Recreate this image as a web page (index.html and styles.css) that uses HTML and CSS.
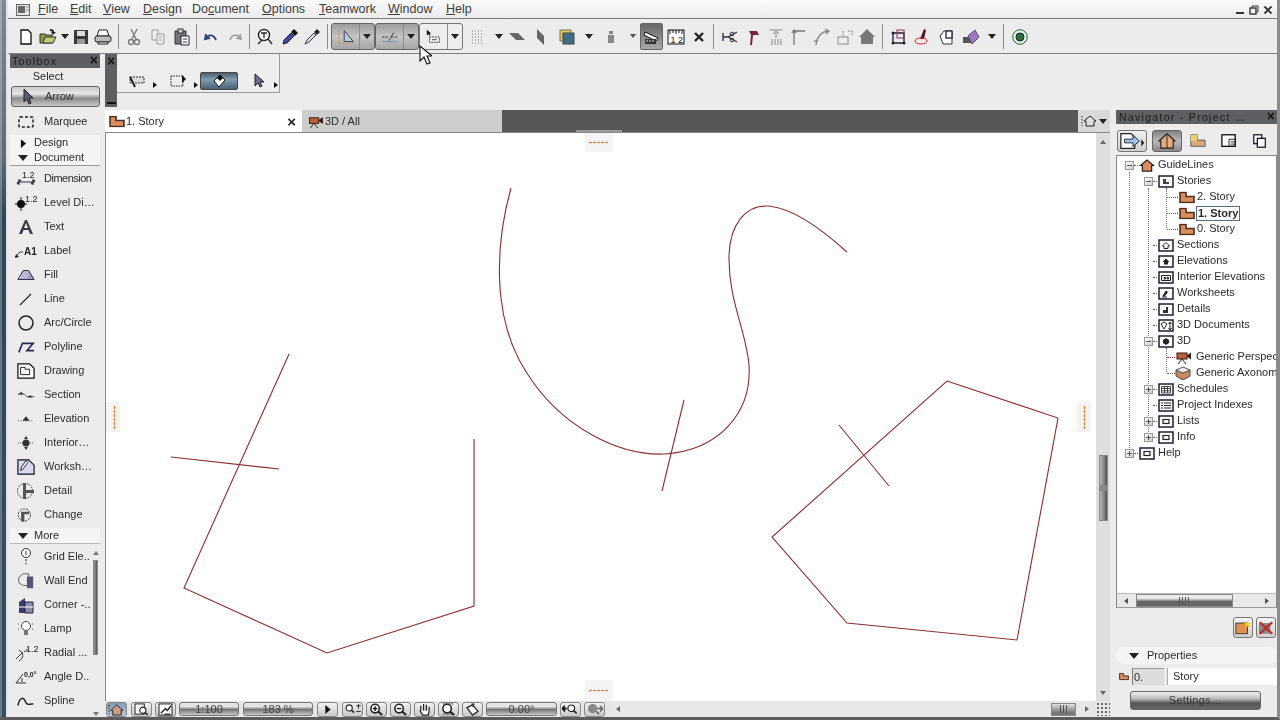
FILE: index.html
```html
<!DOCTYPE html>
<html lang="en">
<head>
<meta charset="utf-8">
<title>Navigator</title>
<link rel="stylesheet" href="styles.css">
</head>
<body>
<svg class="sprite" aria-hidden="true">
  <symbol id="story" viewBox="0 0 16 12"><path d="M1 1h6v4h8v6H1z" fill="#dd8d5c" stroke="#4b3026" stroke-width="1.6"/></symbol>
  <symbol id="box" viewBox="0 0 16 13"><rect x="1" y="1" width="14" height="11" fill="#fff" stroke="#1c1c3a" stroke-width="1.5"/></symbol>
  <symbol id="folder" viewBox="0 0 16 13"><rect x="1" y="1" width="14" height="11" fill="#fff" stroke="#1c1c3a" stroke-width="1.5"/><rect x="5" y="4.5" width="6" height="4" fill="none" stroke="#222" stroke-width="1.2"/></symbol>
  <symbol id="tri-r" viewBox="0 0 8 10"><path d="M1 0l6 5-6 5z" fill="#111"/></symbol>
  <symbol id="tri-d" viewBox="0 0 10 8"><path d="M0 1h10L5 7z" fill="#222"/></symbol>
  <symbol id="tri-g" viewBox="0 0 10 8"><path d="M1 1h8L5 6z" fill="#555"/></symbol>
  <symbol id="mag" viewBox="0 0 18 14"><circle cx="7.5" cy="6" r="4.6" fill="#fff" stroke="#222" stroke-width="1.7"/><path d="M11 9.5l4 3.5" stroke="#222" stroke-width="2.2"/></symbol>
</svg>

<header class="menubar">
  <svg class="appicon" viewBox="0 0 14 12"><rect x=".5" y=".5" width="13" height="11" fill="#e3e6e6" stroke="#666"/><rect x="2" y="2" width="7" height="7" fill="#666"/><path d="M10 3h3M10 6h3" stroke="#888"/></svg>
  <nav class="menus">
    <span class="menu m-file"><u>F</u>ile</span>
    <span class="menu m-edit"><u>E</u>dit</span>
    <span class="menu m-view"><u>V</u>iew</span>
    <span class="menu m-design"><u>D</u>esign</span>
    <span class="menu m-doc">Do<u>c</u>ument</span>
    <span class="menu m-opt"><u>O</u>ptions</span>
    <span class="menu m-team"><u>T</u>eamwork</span>
    <span class="menu m-win"><u>W</u>indow</span>
    <span class="menu m-help"><u>H</u>elp</span>
  </nav>
  <div class="winctl">
    <svg viewBox="0 0 10 10" class="wc"><path d="M1 8h8" stroke="#333" stroke-width="2"/></svg>
    <svg viewBox="0 0 10 10" class="wc"><rect x="1" y="3" width="6" height="6" fill="none" stroke="#333" stroke-width="1.4"/><path d="M3 2.5V1h6v6H7.5" fill="none" stroke="#333"/></svg>
    <svg viewBox="0 0 10 10" class="wc"><path d="M1.500 1.500l7 7M8.500 1.500l-7 7" stroke="#333" stroke-width="1.800"/></svg>
  </div>
</header>

<div class="toolbar">
  <span class="w22"><svg class="i" viewBox="0 0 18 18"><path d="M4 2h7l3 3v11H4z" fill="#fff" stroke="#111" stroke-width="1.300"/></svg></span>
  <span class="w22"><svg class="i" viewBox="0 0 18 18"><path d="M1 6h5l1 1h6v8H1z" fill="#8c9a3e" stroke="#333"/><path d="M4 15l2-6h11l-3 6z" fill="#c7cc77" stroke="#333"/><path d="M11 1c3 0 4 1 4 3h2l-3 3-2-3h1c0-1-1-1-2-1z" fill="#222"/></svg></span>
  <span class="w11"><svg class="ar" viewBox="0 0 10 8"><use href="#tri-d"/></svg></span>
  <span class="w22"><svg class="i" viewBox="0 0 18 18"><path d="M2 2h14v14H2z" fill="#3a3a3a"/><rect x="5" y="3" width="8" height="5" fill="#dcdcdc"/><rect x="5" y="11" width="8" height="5" fill="#999"/></svg></span>
  <span class="w22"><svg class="i" viewBox="0 0 18 18"><path d="M5 2h8l2 6H3z" fill="#fff" stroke="#222"/><rect x="1" y="8" width="16" height="6" rx="2" fill="#bbb" stroke="#222"/><path d="M4 14h10v2H4z" fill="#fff" stroke="#222"/></svg></span>
  <span class="sep w8"></span>
  <span class="w23"><svg class="i" viewBox="0 0 18 18"><g stroke="#777" fill="none" stroke-width="1.300"><path d="M6 1l5 10M12 1L7 11"/><circle cx="6" cy="14" r="2.500"/><circle cx="12" cy="14" r="2.500"/></g></svg></span>
  <span class="w25"><svg class="i" viewBox="0 0 18 18"><path d="M3 2h6v10H3z" fill="#eee" stroke="#999"/><path d="M8 6h7v10H8z" fill="#eee" stroke="#999"/><path d="M10 9h3M10 12h3" stroke="#999"/></svg></span>
  <span class="w23"><svg class="i" viewBox="0 0 18 18"><path d="M2 3h11v13H2z" fill="#777" stroke="#333"/><rect x="5" y="1" width="5" height="4" fill="#ccc" stroke="#333"/><path d="M8 8h8v9H8z" fill="#fff" stroke="#223"/><path d="M10 11h4M10 14h4" stroke="#334"/></svg></span>
  <span class="sep w6"></span>
  <span class="w24"><svg class="i" viewBox="0 0 18 18"><path d="M4 6l-1 5 5-1M3.500 10.500C6 6 12 6 14 12" fill="none" stroke="#2a3f7a" stroke-width="1.800"/></svg></span>
  <span class="w24"><svg class="i" viewBox="0 0 18 18"><path d="M14 6l1 5-5-1M14.500 10.500C12 6 6 6 4 12" fill="none" stroke="#999" stroke-width="1.500"/></svg></span>
  <span class="sep w4"></span>
  <span class="w28"><svg class="i" viewBox="0 0 18 18"><circle cx="8" cy="7" r="5.500" fill="#fff" stroke="#222" stroke-width="1.400"/><path d="M5 5h6M8 5v5M12 11l4 5M2 16l4-4" stroke="#222" stroke-width="1.300"/></svg></span>
  <span class="w21"><svg class="i" viewBox="0 0 18 18"><path d="M2 16l1-4 7-7 3 3-7 7z" fill="#3d4a9e" stroke="#223"/><path d="M10 4l3-3 4 4-3 3z" fill="#111"/></svg></span>
  <span class="w23"><svg class="i" viewBox="0 0 18 18"><path d="M2 16l2-4 7-7 2 2-7 7z" fill="#dfe0f0" stroke="#334"/><path d="M11 4l3-3 3 3-3 3z" fill="#223"/></svg></span>
  <span class="sep w8"></span>
  <span class="tgroup on">
    <span class="tmain"><svg class="i" viewBox="0 0 20 18"><path d="M8 2l10 12H8z" fill="#bcd0d8" stroke="#335"/><path d="M2 2v14M2 16h16" stroke="#b9922f" stroke-dasharray="2 1.500" fill="none"/></svg></span>
    <span class="tdrop"><svg class="ar" viewBox="0 0 10 8"><use href="#tri-d"/></svg></span>
  </span>
  <span class="tgroup on">
    <span class="tmain"><svg class="i" viewBox="0 0 20 18"><path d="M1 9h7M11 9h8" stroke="#334" stroke-dasharray="3 1"/><path d="M9 13l5-9" stroke="#333"/><path d="M2 14h16" stroke="#2e7fc1" stroke-dasharray="2 1"/></svg></span>
    <span class="tdrop"><svg class="ar" viewBox="0 0 10 8"><use href="#tri-d"/></svg></span>
  </span>
  <span class="tgroup">
    <span class="tmain"><svg class="i" viewBox="0 0 20 18"><path d="M2 1v6l2-1 1 2 1-1-1-2h2z" fill="#111"/><rect x="5" y="9" width="11" height="6" fill="none" stroke="#333" stroke-dasharray="2 1"/><path d="M8 12h5" stroke="#333"/></svg></span>
    <span class="tdrop"><svg class="ar" viewBox="0 0 10 8"><use href="#tri-d"/></svg></span>
  </span>
  <span class="w30"><svg class="i" viewBox="0 0 18 18"><path d="M3 3h12M3 6h12M3 9h12M3 12h12M3 15h12" stroke="#777" stroke-dasharray="1 2"/></svg></span>
  <span class="w12"><svg class="ar" viewBox="0 0 10 8"><use href="#tri-d"/></svg></span>
  <span class="w24"><svg class="i" viewBox="0 0 18 18"><path d="M1 5h9l7 7H8z" fill="#666"/></svg></span>
  <span class="w22"><svg class="i" viewBox="0 0 18 18"><path d="M6 1l7 7v9L6 10z" fill="#666"/></svg></span>
  <span class="w32"><svg class="i" viewBox="0 0 18 18"><rect x="2" y="2" width="11" height="11" fill="#e6c65a" stroke="#776"/><rect x="5" y="5" width="11" height="11" fill="#3f6f86" stroke="#444"/></svg></span>
  <span class="w12"><svg class="ar" viewBox="0 0 10 8"><use href="#tri-d"/></svg></span>
  <span class="w32"><svg class="i" viewBox="0 0 18 18"><rect x="7" y="3" width="4" height="3" fill="#888"/><rect x="6" y="7" width="6" height="8" fill="#888"/></svg></span>
  <span class="w12"><svg class="ar" viewBox="0 0 10 8"><use href="#tri-g"/></svg></span>
  <span class="tactive"><svg class="i" viewBox="0 0 18 18"><path d="M2 4l13 6-2 3L1 7z" fill="#fff" stroke="#111"/><path d="M2 11h11v5H2z" fill="#333"/><path d="M3 13h9" stroke="#ddd" stroke-dasharray="2 1"/></svg></span>
  <span class="w23 ml1"><svg class="i" viewBox="0 0 18 18"><rect x="1" y="2" width="16" height="14" fill="#fff" stroke="#111"/><path d="M3 2v4M6 2v3M9 2v4M12 2v3M15 2v4" stroke="#111"/><text x="3.500" y="14.500" class="rule">1 2</text></svg></span>
  <span class="w23"><svg class="i" viewBox="0 0 18 18"><path d="M5 5l8 8M13 5l-8 8" stroke="#222" stroke-width="2.400"/></svg></span>
  <span class="sep w6"></span>
  <span class="w24 ml2"><svg class="i" viewBox="0 0 18 18"><path d="M2 5v8M2 9h5l9-5M7 9l9 5" stroke="#334" fill="none" stroke-width="1.400"/><circle cx="11" cy="6" r="1.800" fill="none" stroke="#334"/><circle cx="11" cy="12" r="1.800" fill="none" stroke="#334"/></svg></span>
  <span class="w23"><svg class="i" viewBox="0 0 18 18"><path d="M4 3h8l2 4H8l-1 10H5L6 7z" fill="#7a2438"/></svg></span>
  <span class="w22"><svg class="i" viewBox="0 0 18 18"><path d="M3 2h12M9 3v7M6 6l3-3 3 3M5 11v6M8 11v6M11 11v6M14 11v6" stroke="#888" fill="none"/></svg></span>
  <span class="w24"><svg class="i" viewBox="0 0 18 18"><path d="M4 17V3h11M2 5l2-3 2 3" stroke="#777" fill="none" stroke-width="1.300"/></svg></span>
  <span class="w22"><svg class="i" viewBox="0 0 18 18"><path d="M3 17C4 9 8 4 15 3M12 1l4 2-3 3M1 13h4" stroke="#888" fill="none" stroke-width="1.300"/></svg></span>
  <span class="w23"><svg class="i" viewBox="0 0 18 18"><rect x="2" y="9" width="10" height="7" fill="none" stroke="#888"/><path d="M7 3v6M12 3h4v4" stroke="#888" stroke-dasharray="2 1" fill="none"/></svg></span>
  <span class="w22"><svg class="i" viewBox="0 0 18 18"><path d="M9 1l8 8h-2v7H3V9H1z" fill="#777"/></svg></span>
  <span class="sep w8"></span>
  <span class="w24"><svg class="i" viewBox="0 0 18 18"><path d="M4 5h11v10H4z" fill="none" stroke="#223" stroke-width="1.300"/><rect x="8" y="2" width="7" height="8" fill="none" stroke="#8b2a5c"/><circle cx="4" cy="15" r="1.500" fill="#223"/><circle cx="15" cy="15" r="1.500" fill="#223"/><circle cx="4" cy="5" r="1.500" fill="#223"/></svg></span>
  <span class="w24"><svg class="i" viewBox="0 0 18 18"><path d="M11 1l2 1-2 9H7z" fill="#4a1a2a"/><ellipse cx="8" cy="13" rx="6" ry="3" fill="none" stroke="#c23"/></svg></span>
  <span class="w24"><svg class="i" viewBox="0 0 18 18"><path d="M3 8l4-5h8v13H6z" fill="#fff" stroke="#334"/><rect x="9" y="3" width="6" height="7" fill="#fff" stroke="#223" stroke-width="1.300"/></svg></span>
  <span class="w26"><svg class="i" viewBox="0 0 18 18"><path d="M1 9h8v6H1z" fill="#555"/><path d="M6 8l7-6 4 7-7 7z" fill="#9a78c2" stroke="#5a4a7a"/></svg></span>
  <span class="w16"><svg class="ar" viewBox="0 0 10 8"><use href="#tri-d"/></svg></span>
  <span class="sep w6"></span>
  <span class="w28"><svg class="i" viewBox="0 0 18 18"><circle cx="9" cy="9" r="7.300" fill="#e4efe4" stroke="#2b6a3a"/><circle cx="9" cy="9" r="4" fill="#2f6d3a" stroke="#123"/></svg></span>
</div>

<div class="work">
  <aside class="toolbox">
    <div class="ph">Toolbox<span class="phx">×</span></div>
    <div class="sel">Select</div>
    <div class="tool arrow"><span class="ti"><svg class="i" viewBox="0 0 18 18"><path d="M5 1v13l3-3 2 5 2-1-2-5h4z" fill="#5a5a7a" stroke="#222"/></svg></span><span class="tl">Arrow</span></div>
    <div class="tool"><span class="ti"><svg class="i" viewBox="0 0 18 18"><rect x="2" y="4" width="14" height="10" rx="1" fill="none" stroke="#222" stroke-width="1.500" stroke-dasharray="3 2"/></svg></span><span class="tl">Marquee</span></div>
    <div class="sect s1"><svg class="tr" viewBox="0 0 8 10"><use href="#tri-r"/></svg>Design</div>
    <div class="sect s2"><svg class="td" viewBox="0 0 10 8"><use href="#tri-d"/></svg>Document</div>
    <div class="tool"><span class="ti"><svg class="iw" viewBox="0 0 24 18"><path d="M3 12h18M5 9v6M19 9v6M3 14l4-4M17 14l4-4" stroke="#334" stroke-width="1.200"/><text x="8" y="8" class="sup">1.2</text></svg></span><span class="tl tight">Dimension</span></div>
    <div class="tool"><span class="ti"><svg class="iw" viewBox="0 0 24 18"><circle cx="7" cy="10" r="4" fill="#111"/><path d="M7 3v14M1 10h12" stroke="#111"/><text x="11" y="8" class="sup">1.2</text></svg></span><span class="tl">Level Di…</span></div>
    <div class="tool"><span class="ti"><svg class="i" viewBox="0 0 18 18"><path d="M2 16L8 2h2l6 14h-3l-1.500-4h-5L5 16zM7 10h4L9 5z" fill="#3a3a4a"/></svg></span><span class="tl">Text</span></div>
    <div class="tool"><span class="ti"><svg class="iw" viewBox="0 0 24 18"><path d="M1 15l5-5h3" stroke="#333" fill="none"/><path d="M1 16l1-4 3 3z" fill="#222"/><text x="10" y="13" class="lab">A1</text></svg></span><span class="tl">Label</span></div>
    <div class="tool"><span class="ti"><svg class="i" viewBox="0 0 20 18"><path d="M1 14L7 4h6l6 10z" fill="#9d97c4" stroke="#223"/><path d="M3 13l6-8M6 13l6-8M9 13l4-5" stroke="#fff"/></svg></span><span class="tl">Fill</span></div>
    <div class="tool"><span class="ti"><svg class="i" viewBox="0 0 18 18"><path d="M3 15L14 4" stroke="#222" stroke-width="1.200"/></svg></span><span class="tl">Line</span></div>
    <div class="tool"><span class="ti"><svg class="i" viewBox="0 0 18 18"><circle cx="9" cy="9" r="7" fill="none" stroke="#222" stroke-width="1.500"/></svg></span><span class="tl">Arc/Circle</span></div>
    <div class="tool"><span class="ti"><svg class="i" viewBox="0 0 20 18"><path d="M2 15L6 5h12l-7 8h8" fill="none" stroke="#2a2a55" stroke-width="1.800"/></svg></span><span class="tl">Polyline</span></div>
    <div class="tool"><span class="ti"><svg class="i" viewBox="0 0 20 18"><path d="M1 1h13l5 5v11H1z" fill="#fff" stroke="#111" stroke-width="1.400"/><path d="M4 5h5v2h5v6H4z" fill="none" stroke="#111"/></svg></span><span class="tl">Drawing</span></div>
    <div class="tool"><span class="ti"><svg class="i" viewBox="0 0 22 18"><path d="M1 8h8l3 3h9" stroke="#333" fill="none"/><path d="M5 5l3 3H2zM16 9l3 3h-6z" fill="#333"/></svg></span><span class="tl">Section</span></div>
    <div class="tool"><span class="ti"><svg class="i" viewBox="0 0 20 18"><path d="M1 11h18" stroke="#333" stroke-dasharray="1 2"/><path d="M10 6l4 5H6z" fill="#333"/></svg></span><span class="tl">Elevation</span></div>
    <div class="tool"><span class="ti"><svg class="i" viewBox="0 0 18 18"><path d="M1 9h16" stroke="#555" stroke-dasharray="1 1"/><circle cx="9" cy="9" r="3.500" fill="#333"/><path d="M9 2l2 3H7zM9 16l2-3H7z" fill="#333"/></svg></span><span class="tl">Interior…</span></div>
    <div class="tool"><span class="ti"><svg class="i" viewBox="0 0 20 18"><path d="M1 1h12l6 6v10H1z" fill="#d8d8f0" stroke="#112" stroke-width="1.300"/><path d="M4 13l1-4 5-7 2 2-5 7z" fill="#fff" stroke="#111"/></svg></span><span class="tl">Worksh…</span></div>
    <div class="tool"><span class="ti"><svg class="i" viewBox="0 0 18 18"><circle cx="8" cy="9" r="7.500" fill="none" stroke="#333" stroke-dasharray="1.500 1"/><path d="M6 1h3v7h8v3H9v6H6z" fill="#555"/></svg></span><span class="tl">Detail</span></div>
    <div class="tool"><span class="ti"><svg class="i" viewBox="0 0 22 18"><circle cx="9" cy="9" r="7.500" fill="none" stroke="#333" stroke-dasharray="3 1"/><path d="M5 5h10v3H9v9H5z" fill="#555"/></svg></span><span class="tl">Change</span></div>
    <div class="sect s3"><svg class="td" viewBox="0 0 10 8"><use href="#tri-d"/></svg>More</div>
    <div class="more">
      <div class="morelist">
        <div class="tool"><span class="ti"><svg class="i" viewBox="0 0 18 18"><circle cx="9" cy="5" r="4.500" fill="#fff" stroke="#333"/><path d="M9 3v4" stroke="#333"/><path d="M9 11v7" stroke="#333" stroke-dasharray="2 1.500"/></svg></span><span class="tl">Grid Ele..</span></div>
        <div class="tool"><span class="ti"><svg class="i" viewBox="0 0 20 18"><path d="M2 5l5-4h6v13H7l-5-3z" fill="#eee" stroke="#555"/><path d="M11 4h7v13h-7z" fill="#55557a"/></svg></span><span class="tl">Wall End</span></div>
        <div class="tool"><span class="ti"><svg class="i" viewBox="0 0 18 18"><path d="M2 6l6-4v15H2z" fill="#3a3a66"/><path d="M8 6h8v11H8z" fill="#8b8bb0" stroke="#223"/><path d="M2 11h14" stroke="#fff"/></svg></span><span class="tl">Corner -..</span></div>
        <div class="tool"><span class="ti"><svg class="i" viewBox="0 0 18 18"><circle cx="9" cy="6" r="4.500" fill="#fff" stroke="#444"/><path d="M7 11h4v4H7z" fill="#777"/><path d="M1 4h2M15 4h2M1 9h2M15 9h2" stroke="#555" stroke-dasharray="1 1"/></svg></span><span class="tl">Lamp</span></div>
        <div class="tool"><span class="ti"><svg class="iw" viewBox="0 0 24 18"><path d="M5 6c5 3 5 8 0 11M2 15l7-7" fill="none" stroke="#333"/><path d="M10 8l4-3" stroke="#333"/><text x="12" y="8" class="sup">1.2</text></svg></span><span class="tl">Radial ...</span></div>
        <div class="tool"><span class="ti"><svg class="iw" viewBox="0 0 24 18"><path d="M2 15L9 6M2 15h10M8 14v-4" stroke="#333" fill="none"/><text x="10" y="9" class="lab2">0,0°</text></svg></span><span class="tl">Angle D..</span></div>
        <div class="tool"><span class="ti"><svg class="i" viewBox="0 0 20 18"><path d="M1 14C3 5 7 4 9 9s4 4 9 3" fill="none" stroke="#222" stroke-width="1.600"/></svg></span><span class="tl">Spline</span></div>
      </div>
      <div class="vscroll small">
        <svg class="sa" viewBox="0 0 8 6"><path d="M4 1l3 4H1z" fill="#777"/></svg>
        <div class="smalltrack"><div class="smallthumb"></div></div>
        <svg class="sa" viewBox="0 0 8 6"><path d="M4 5l3-4H1z" fill="#777"/></svg>
      </div>
    </div>
  </aside>

  <div class="infobox">
    <div class="dockbar"><span class="phx">×</span><span class="grip"></span></div>
    <div class="infoicons">
      <span class="ib ib1"><svg class="i" viewBox="0 0 18 14"><rect x="1" y="3" width="14" height="6" fill="#ddd" stroke="#333" stroke-dasharray="2 1"/><path d="M1 3l5 10" stroke="#222" stroke-width="2"/></svg><i class="cor"></i></span>
      <span class="ib ib2"><svg class="i" viewBox="0 0 18 14"><rect x="1" y="2" width="12" height="10" fill="none" stroke="#222" stroke-dasharray="1.500 1"/><path d="M12 1l4 4-4 4z" fill="#111"/></svg><i class="cor"></i></span>
      <span class="ib3"><svg class="i" viewBox="0 0 18 14"><path d="M4 7l6-6 5 5-6 7z" fill="#fff" stroke="#111"/><path d="M7 4l3-3 3 3-3 3z" fill="#111"/></svg></span>
      <span class="ib ib4"><svg class="i" viewBox="0 0 18 16"><path d="M5 1v12l3-3 2 4 2-1-2-4h4z" fill="#6a6a94" stroke="#222"/></svg><i class="cor"></i></span>
    </div>
  </div>

  <main class="center">
    <div class="tabs">
      <div class="tab active"><svg class="tabicon" viewBox="0 0 16 12"><use href="#story"/></svg><span>1. Story</span><span class="tabx">×</span></div>
      <div class="tab inactive"><svg class="tabicon" viewBox="0 0 16 14"><rect x="2" y="3" width="10" height="6" fill="#b6603a" stroke="#3a1a10"/><path d="M12 6l4-3v6zM7 9l-4 5M7 9l4 5" stroke="#3a1a10" fill="#3a1a10"/></svg><span>3D / All</span></div>
      <div class="tabfill"><span class="ghost"></span></div>
      <div class="tabmenu"><svg class="tabm" viewBox="0 0 26 14"><path d="M1 2v10" stroke="#333" stroke-dasharray="1.500 1.500"/><path d="M3 7l6-5 6 5h-2v5H5V7z" fill="#ddd" stroke="#222"/><path d="M18 5h8l-4 5z" fill="#222"/></svg></div>
    </div>
    <div class="canvasrow">
      <div class="canvas">
        <svg class="drawing" viewBox="106 133 990 568" preserveAspectRatio="none">
          <g class="ln">
            <path d="M289 354L184 588 327 653 474 606V439"/>
            <path d="M171 457L279 469"/>
            <path d="M511 188C495 245 492 318 525 370C560 428 620 456 665 454C720 450 752 412 749 365C746 330 728 300 729 255C730 225 745 205 768 206C795 208 825 232 847 252"/>
            <path d="M684 400L662 491"/>
            <path d="M947 381L1058 418 1017 640 847 623 772 537z"/>
            <path d="M839 425L889 486"/>
          </g>
          <g class="mk">
            <rect x="585" y="133" width="28" height="19"/><rect x="585" y="680" width="28" height="20"/>
            <rect x="106" y="402" width="14" height="30"/><rect x="1077" y="402" width="14" height="30"/>
          </g>
          <g class="mo">
            <path d="M589 142.500h20M589 690.500h20"/><path d="M114.500 406v23M1084.500 406v23"/>
          </g>
        </svg>
      </div>
      <div class="vscroll main">
        <svg class="sa up" viewBox="0 0 8 6"><path d="M4 1l3 4H1z" fill="#666"/></svg>
        <div class="track"><div class="thumb"></div></div>
        <svg class="sa" viewBox="0 0 8 6"><path d="M4 5l3-4H1z" fill="#666"/></svg>
      </div>
    </div>
    <div class="status">
      <span class="sb on"><svg class="si" viewBox="0 0 18 14"><path d="M1 2v10" stroke="#111" stroke-dasharray="1.500 1.500"/><path d="M3 8l6-6 7 6h-2v5H5V8z" fill="#c98" stroke="#222"/></svg></span>
      <span class="sb mla"><svg class="si" viewBox="0 0 18 14"><rect x="2" y="1" width="10" height="11" fill="#fff" stroke="#111"/><use href="#mag" x="5" y="3" width="13" height="11"/></svg></span>
      <span class="sb"><svg class="si" viewBox="0 0 18 14"><rect x="2" y="1" width="14" height="12" fill="#fff" stroke="#111"/><path d="M4 11l5-5 2 2 4-5M8 12h6" stroke="#222" stroke-width="1.500" fill="none"/></svg></span>
      <span class="sv v1">1:100</span>
      <span class="sv v2 mla">183 %</span>
      <span class="sb mla"><svg class="sp" viewBox="0 0 8 10"><use href="#tri-r"/></svg></span>
      <span class="sb mla"><svg class="si" viewBox="0 0 18 14"><use href="#mag" width="13" height="12"/><path d="M13 3h5M15.500 1v5M13 9h5" stroke="#222"/></svg></span>
      <span class="sb"><svg class="si" viewBox="0 0 18 14"><use href="#mag"/><path d="M5 6h5M7.500 3.500v5" stroke="#111" stroke-width="1.500"/></svg></span>
      <span class="sb"><svg class="si" viewBox="0 0 18 14"><use href="#mag"/><path d="M5 6h5" stroke="#111" stroke-width="1.500"/></svg></span>
      <span class="sb"><svg class="si" viewBox="0 0 18 14"><path d="M5 8V3M8 8V1M11 8V2M14 9V4M4 8l3 5h6l1-4" fill="#fff" stroke="#222" stroke-width="1.300"/></svg></span>
      <span class="sb"><svg class="si" viewBox="0 0 18 14"><use href="#mag"/><path d="M3 1h11M3 12h11" stroke="#222" stroke-dasharray="2 1"/></svg></span>
      <span class="sb"><svg class="si" viewBox="0 0 18 14"><path d="M3 5l6-3 6 7-6 4z" fill="#fff" stroke="#222" stroke-width="1.300"/><path d="M8 1h3l-2 3" stroke="#222" fill="none"/></svg></span>
      <span class="sv v3">0.00°</span>
      <span class="sb"><svg class="si" viewBox="0 0 18 14"><path d="M0 6h5M3 3l-3 3 3 3" stroke="#111" stroke-width="1.800" fill="none"/><use href="#mag" x="4" width="14" height="13"/></svg></span>
      <span class="sb"><svg class="si" viewBox="0 0 18 14"><circle cx="7" cy="6" r="5" fill="#888"/><path d="M11 9l3 3M12 6h5M15 3l3 3-3 3" stroke="#666" stroke-width="1.600" fill="none"/></svg></span>
      <div class="hbar">
        <svg class="sah" viewBox="0 0 6 8"><path d="M1 4l4-3v6z" fill="#666"/></svg>
        <span class="hspace"></span>
        <span class="hthumb"></span>
        <svg class="sah" viewBox="0 0 6 8"><path d="M5 4L1 1v6z" fill="#666"/></svg>
      </div>
      <span class="sgrip"></span>
    </div>
  </main>

  <aside class="navigator">
    <div class="ph nav">Navigator - Project …<span class="phx">×</span></div>
    <div class="navbtns">
      <span class="nb first"><svg class="nbi" viewBox="0 0 28 18"><path d="M2 1h11l4 4v12H2z" fill="#fff" stroke="#222" stroke-width="1.300"/><path d="M6 7h9V3l7 6-7 6v-4H6z" fill="#9fc6e8" stroke="#223"/><path d="M24 7l3 4-3 4z" fill="#111"/></svg></span>
      <span class="nb active"><svg class="nbs" viewBox="0 0 22 18"><path d="M2 9l9-8 9 8h-2v8H4V9z" fill="#e5a97a" stroke="#222" stroke-width="1.300"/><path d="M11 2v15" stroke="#222"/></svg></span>
      <span class="nb"><svg class="nbs" viewBox="0 0 22 18"><path d="M3 2h7v6h9v7H3z" fill="#d9a97a" stroke="#555"/><path d="M3 2h7v7H3z" fill="#e8d36a"/></svg></span>
      <span class="nb"><svg class="nbs" viewBox="0 0 22 18"><rect x="3" y="2" width="15" height="13" fill="#fff" stroke="#111" stroke-width="1.500"/><path d="M11 7h7v8h-7zM13 10h4M13 12.500h4" fill="none" stroke="#111"/></svg></span>
      <span class="nb"><svg class="nbs" viewBox="0 0 22 18"><rect x="4" y="2" width="9" height="10" fill="#fff" stroke="#112" stroke-width="1.400"/><rect x="8" y="6" width="9" height="10" fill="#fff" stroke="#112" stroke-width="1.400"/></svg></span>
    </div>
    <div class="tree">
      <span class="vl vl0"></span><span class="vl vl1"></span><span class="vl vl2"></span><span class="vl vl3"></span>
      <div class="row l0"><i class="xp minus"></i><i class="dot"></i><svg class="ic" viewBox="0 0 16 14"><path d="M1 7l7-6 7 6h-2v6H3V7z" fill="#dd8d5c" stroke="#222" stroke-width="1.300"/></svg><span>GuideLines</span></div>
      <div class="row l1"><i class="xp minus"></i><i class="dot"></i><svg class="ic" viewBox="0 0 16 13"><use href="#box"/><path d="M5 4h3v3h3v2H5z" fill="#444"/></svg><span>Stories</span></div>
      <div class="row l2"><i class="dot"></i><svg class="ic" viewBox="0 0 16 12"><use href="#story"/></svg><span>2. Story</span></div>
      <div class="row l2"><i class="dot"></i><svg class="ic" viewBox="0 0 16 12"><use href="#story"/></svg><span class="cur">1. Story</span></div>
      <div class="row l2"><i class="dot"></i><svg class="ic" viewBox="0 0 16 12"><use href="#story"/></svg><span>0. Story</span></div>
      <div class="row l1"><i class="xp none"></i><i class="dot"></i><svg class="ic" viewBox="0 0 16 13"><use href="#box"/><path d="M4.500 7L8 3.500 11.500 7H10v2.500H6V7z" fill="#fff" stroke="#222"/></svg><span>Sections</span></div>
      <div class="row l1"><i class="xp none"></i><i class="dot"></i><svg class="ic" viewBox="0 0 16 13"><use href="#box"/><path d="M4.500 7L8 3.500 11.500 7H10v2.500H6V7z" fill="#222"/></svg><span>Elevations</span></div>
      <div class="row l1"><i class="xp none"></i><i class="dot"></i><svg class="ic" viewBox="0 0 16 13"><use href="#box"/><path d="M3.500 4.500h9v5h-9zM6 6.500h1.500v1.500H6zM9 6.500h1.500v1.500H9z" fill="none" stroke="#222"/></svg><span>Interior Elevations</span></div>
      <div class="row l1"><i class="xp none"></i><i class="dot"></i><svg class="ic" viewBox="0 0 16 13"><use href="#box"/><path d="M4 10h5M5 9l3-5 1.500 1-3 4z" fill="#222" stroke="#222"/></svg><span>Worksheets</span></div>
      <div class="row l1"><i class="xp none"></i><i class="dot"></i><svg class="ic" viewBox="0 0 16 13"><use href="#box"/><path d="M5 7h3V4h2v6H5z" fill="#333"/></svg><span>Details</span></div>
      <div class="row l1"><i class="xp none"></i><i class="dot"></i><svg class="ic" viewBox="0 0 16 13"><use href="#box"/><path d="M3 5l3-2 3 2-3 5z" fill="#fff" stroke="#222"/><path d="M12 3v8M10.500 5L12 3l1.500 2M10.500 9l1.500 2 1.500-2" stroke="#222" fill="none"/></svg><span>3D Documents</span></div>
      <div class="row l1"><i class="xp minus"></i><i class="dot"></i><svg class="ic" viewBox="0 0 16 13"><use href="#box"/><path d="M5 5l3-2 3 2v3l-3 2-3-2z" fill="#222"/></svg><span>3D</span></div>
      <div class="row l2b"><i class="dot red"></i><svg class="ic wide" viewBox="0 0 16 14"><rect x="2" y="3" width="10" height="6" fill="#b6603a" stroke="#3a1a10"/><path d="M12 6l4-3v6zM7 9l-4 5M7 9l4 5" stroke="#3a1a10" fill="#3a1a10"/></svg><span>Generic Perspec</span></div>
      <div class="row l2b"><i class="dot"></i><svg class="ic wide" viewBox="0 0 16 14"><path d="M1 4l7 3 7-3v6l-7 4-7-4z" fill="#c98b5c" stroke="#444"/><path d="M1 4l7-3 7 3-7 3z" fill="#eee" stroke="#555"/></svg><span>Generic Axonom</span></div>
      <div class="row l1"><i class="xp plus"></i><i class="dot"></i><svg class="ic" viewBox="0 0 16 13"><use href="#box"/><path d="M3.500 3.500h9v6.500h-9zM3.500 5.500h9M3.500 7.800h9M6.500 3.500v6.500M9.500 3.500v6.500" fill="none" stroke="#222" stroke-width=".8"/></svg><span>Schedules</span></div>
      <div class="row l1"><i class="xp none"></i><i class="dot"></i><svg class="ic" viewBox="0 0 16 13"><use href="#box"/><path d="M3 4h2M6 4h7M3 6.500h2M6 6.500h7M3 9h2M6 9h7" stroke="#222"/></svg><span>Project Indexes</span></div>
      <div class="row l1"><i class="xp plus"></i><i class="dot"></i><svg class="ic" viewBox="0 0 16 13"><use href="#folder"/></svg><span>Lists</span></div>
      <div class="row l1"><i class="xp plus"></i><i class="dot"></i><svg class="ic" viewBox="0 0 16 13"><use href="#folder"/></svg><span>Info</span></div>
      <div class="row l0"><i class="xp plus"></i><i class="dot"></i><svg class="ic" viewBox="0 0 16 13"><use href="#folder"/></svg><span>Help</span></div>
    </div>
    <div class="navscroll">
      <svg class="sah" viewBox="0 0 6 8"><path d="M1 4l4-3v6z" fill="#555"/></svg>
      <span class="navthumb"></span>
      <svg class="sah" viewBox="0 0 6 8"><path d="M5 4L1 1v6z" fill="#555"/></svg>
    </div>
    <div class="navactions">
      <span class="na"><svg class="nai" viewBox="0 0 18 16"><rect x="1" y="3" width="13" height="12" fill="#e0914f" stroke="#332"/><path d="M14 0l1 3 3 0-2 2 1 3-3-1.500-3 1.500 1-3-2-2 3 0z" fill="#e6d400"/></svg></span>
      <span class="na"><svg class="nai" viewBox="0 0 18 16"><rect x="1" y="3" width="13" height="12" fill="#888"/><path d="M2 2l14 13M16 2L2 15" stroke="#c0271f" stroke-width="2.400"/></svg></span>
    </div>
    <div class="props"><svg class="td big" viewBox="0 0 10 8"><use href="#tri-d"/></svg>Properties</div>
    <div class="proprow">
      <svg class="pi" viewBox="0 0 16 12"><use href="#story"/></svg>
      <span class="fld idx">0.</span>
      <span class="fld name">Story</span>
    </div>
    <div class="settings">Settings…</div>
  </aside>
</div>

<svg class="cursor" viewBox="0 0 13 21"><path d="M1 1v15l4-4 3 7 3-1-3-7h5z" fill="#fff" stroke="#111" stroke-width="1.100"/></svg>
</body>
</html>
```

FILE: styles.css
```css
* { box-sizing: border-box; }
html, body { margin: 0; height: 720px; }
body {
  position: relative;
  width: 1280px;
  overflow: hidden;
  background: #ececec;
  color: #2b2b2b;
  font: 11px/1.2 "Liberation Sans", Arial, sans-serif;
  display: flex;
  flex-direction: column;
  padding-left: 8px;
  border-bottom: 3px solid #5c5c5c;
  border-right: 3px solid #8c8c8c;
  filter: blur(.3px);
}
body::before {
  content: "";
  position: absolute;
  left: 0; top: 0; bottom: 0;
  width: 8px;
  background:
    linear-gradient(90deg, rgba(255,255,255,.25) 0 2px, rgba(0,0,0,0) 2px 6px, #e2e6e8 6px 8px),
    linear-gradient(#7d8a96, #5c6b78 22%, #2f4755 30%, #34505f);
}
.sprite { position: absolute; width: 0; height: 0; }
.cursor { position: absolute; left: 419px; top: 45px; width: 13px; height: 21px; }

/* menu bar */
.menubar {
  height: 19px;
  display: flex;
  align-items: center;
  background: linear-gradient(#fafafa, #ececec);
  border-bottom: 1px solid #7b7b7b;
  padding-top: 1px;
}
.appicon { width: 14px; height: 12px; margin-left: 8px; }
.menus { display: flex; font-size: 12.5px; color: #3c3c3c; margin-left: 8px; }
.menu { display: block; }
.m-file { width: 32px; }
.m-edit { width: 33px; }
.m-view { width: 40px; }
.m-design { width: 49px; }
.m-doc { width: 70px; }
.m-opt { width: 57px; }
.m-team { width: 69px; }
.m-win { width: 58px; }
.winctl { margin-left: auto; margin-right: 4px; display: flex; gap: 4px; }
.wc { width: 10px; height: 10px; }

/* main toolbar */
.toolbar {
  height: 35px;
  padding: 1px 0 0 7px;
  display: flex;
  align-items: center;
  border-bottom: 1px solid #808080;
  background: #ececec;
}
.toolbar > span { display: flex; align-items: center; justify-content: center; flex: none; }
.i { width: 18px; height: 18px; display: block; flex: none; }
.iw { width: 24px; height: 18px; display: block; flex: none; }
.ar { width: 8px; height: 7px; }
.w4 { width: 4px; } .w6 { width: 6px; } .w8 { width: 8px; } .w11 { width: 11px; }
.w12 { width: 12px; } .w16 { width: 16px; } .w21 { width: 21px; } .w22 { width: 22px; }
.w23 { width: 23px; } .w24 { width: 24px; } .w25 { width: 25px; } .w26 { width: 26px; }
.w28 { width: 28px; } .w30 { width: 30px; } .w32 { width: 32px; }
.ml1 { margin-left: 1px; } .ml2 { margin-left: 2px; }
.toolbar > .sep { position: relative; height: 25px; }
.sep::after { content: ""; width: 1px; height: 25px; background: #8a8a8a; }
.toolbar > .tgroup {
  width: 44px; height: 27px;
  border: 1px solid #777;
  border-radius: 3px;
  background: #ededed;
}
.toolbar > .tgroup.on { background: linear-gradient(#9d9d9d, #c4c4c4 50%, #a6a6a6); border-color: #666; }
.tmain { flex: 1; display: flex; justify-content: center; align-items: center; height: 100%; }
.tdrop { width: 15px; height: 100%; display: flex; justify-content: center; align-items: center; border-left: 1px solid #8a8a8a; }
.toolbar > .tactive {
  width: 23px; height: 27px; margin-left: 1px;
  border-radius: 2px;
  background: linear-gradient(#666, #a9a9a9);
  border: 1px solid #666;
}
.rule { font: 9px "Liberation Sans", sans-serif; fill: #111; }

/* workspace grid */
.work {
  flex: 1;
  min-height: 0;
  display: grid;
  grid-template-columns: 97px 1005px 6px 161px;
  grid-template-rows: 53px 1fr;
}
.toolbox { grid-row: 1 / 3; grid-column: 1; padding: 0 5px 0 2px; display: flex; flex-direction: column; min-height: 0; }
.ph {
  height: 14px;
  flex: none;
  background: #5d5f62;
  color: #1c1c1c;
  font-size: 10.5px;
  letter-spacing: 1.3px;
  line-height: 14px;
  padding-left: 2px;
  display: flex;
  justify-content: space-between;
}
.phx { color: #151515; font-size: 14px; font-weight: bold; line-height: 13px; padding-right: 2px; letter-spacing: 0; }
.sel { height: 18px; line-height: 16px; text-align: center; margin-right: 14px; }
.tool { height: 24px; flex: none; display: flex; align-items: center; }
.ti { width: 34px; display: flex; justify-content: center; flex: none; padding-right: 2px; }
.tl { white-space: nowrap; }
.tl.tight { letter-spacing: -.5px; }
.tool.arrow {
  height: 21px;
  margin: 0 0 3px 1px;
  border: 1px solid #666;
  border-radius: 3px;
  background: linear-gradient(#c9c9c9, #e8e8e8 35%, #8b8b8b 60%, #c8c8c8);
  color: #333;
}
.tool.arrow .ti { width: 33px; }
.sect { flex: none; display: flex; align-items: center; background: #f4f4f4; padding-left: 9px; }
.s1 { margin-top: 1px; height: 16px; }
.s2 { height: 15px; border-bottom: 1px solid #999; margin-bottom: 1px; }
.s3 { height: 16px; border-bottom: 1px solid #bbb; margin: 1px 0; }
.tr { width: 7px; height: 9px; margin: 0 7px 0 1px; }
.td { width: 10px; height: 8px; margin-right: 6px; margin-left: -1px; }
.more { flex: 1; min-height: 0; display: flex; justify-content: space-between; }
.morelist { width: 81px; flex: none; overflow: hidden; }
.vscroll { display: flex; flex-direction: column; align-items: center; }
.small { width: 10px; padding-top: 5px; }
.sa { width: 8px; height: 6px; flex: none; }
.smalltrack { flex: 1; width: 8px; margin: 4px 0; }
.smallthumb { height: 95px; width: 5px; margin-left: 1px; margin-top: 0; background: linear-gradient(90deg, #999, #555); border: 1px solid #888; }
.sup { font: 9px "Liberation Sans", sans-serif; fill: #222; }
.lab { font: bold 10px "Liberation Sans", sans-serif; fill: #222; }
.lab2 { font: bold 7px "Liberation Sans", sans-serif; fill: #222; }

/* info box */
.infobox { grid-column: 2 / 5; grid-row: 1; display: flex; }
.dockbar { width: 12px; height: 53px; background: #5d5f62; display: flex; flex-direction: column; align-items: center; }
.dockbar .phx { padding: 0; margin-top: 1px; }
.grip { margin-top: auto; margin-bottom: 3px; width: 9px; height: 2px; background: #111; }
.infoicons {
  width: 163px; height: 39px;
  padding-left: 12px;
  padding-top: 18px;
  display: flex;
  align-items: flex-start;
  border-right: 1px solid #999;
  border-bottom: 1px solid #999;
  background: #ededed;
}
.ib { position: relative; display: flex; height: 18px; align-items: center; flex: none; }
.cor { display: block; width: 0; height: 0; border-left: 4px solid #111; border-top: 3px solid transparent; border-bottom: 3px solid transparent; position: absolute; left: 24px; bottom: 2px; }
.ib1 { width: 41px; }
.ib2 { width: 30px; }
.ib3 {
  width: 38px; height: 18px; flex: none;
  display: flex; justify-content: center; align-items: center;
  background: linear-gradient(#4d5d6c, #7f9bb0 40%, #486275);
  border: 1px solid #444;
  border-radius: 2px;
}
.ib4 { width: 20px; margin-left: 12px; }

/* center */
.center { grid-column: 2; grid-row: 2; display: flex; flex-direction: column; padding-top: 3px; min-height: 0; }
.tabs { height: 23px; display: flex; flex: none; border-bottom: 1px solid #888; }
.tab { display: flex; align-items: center; font-size: 11px; padding-top: 1px; }
.tab.active { width: 197px; background: #fff; padding: 1px 6px 0 4px; }
.tab.inactive { width: 200px; background: #cdcdcd; padding-left: 5px; }
.tabicon { width: 16px; height: 13px; margin-right: 1px; }
.tab.inactive .tabicon { margin-right: 2px; }
.tabx { margin-left: auto; font-size: 15px; font-weight: bold; line-height: 12px; color: #222; }
.tabfill { width: 576px; background: #575757; position: relative; }
.ghost { position: absolute; left: 74px; bottom: 0; width: 46px; height: 2px; background: #9a9a9a; }
.tabmenu { flex: 1; background: #d9d9d9; display: flex; align-items: center; justify-content: center; }
.tabm { width: 26px; height: 14px; }
.canvasrow { flex: 1; min-height: 0; display: flex; }
.canvas { width: 991px; background: #fff; border-left: 1px solid #8a8a8a; }
.drawing { display: block; width: 100%; height: 100%; }
.ln path { fill: none; stroke: #8c2f2f; stroke-width: 1.100; }
.mk rect { fill: #f4f4f4; }
.mo path { fill: none; stroke: #e08a3a; stroke-width: 1.500; stroke-dasharray: 3 1; }
.main { width: 14px; background: #dedede; padding: 6px 0 5px; }
.track { flex: 1; width: 100%; padding-top: 310px; }
.thumb { height: 66px; width: 9px; margin-left: 3px; background: linear-gradient(#888, #888) center / 7px 6px no-repeat, linear-gradient(90deg, #bbb, #555); border: 1px solid #888; }
.status {
  height: 16px; flex: none;
  display: flex; align-items: center; gap: 3px;
  padding-left: 1px;
  background: #e6e6e6;
}
.mla { margin-left: 1px; }
.sb {
  width: 21px; height: 15px; flex: none;
  border: 1px solid #888; border-radius: 3px;
  background: linear-gradient(#f2f2f2, #c9c9c9);
  display: flex; align-items: center; justify-content: center;
}
.sb.on { background: linear-gradient(#7e9db5, #b4c7d4); }
.si { width: 17px; height: 13px; }
.sp { width: 8px; height: 9px; }
.sv {
  height: 14px; flex: none;
  border: 1px solid #777; border-radius: 3px;
  background: linear-gradient(#e5e5e5 30%, #727272 55%, #888 65%, #c8c8c8);
  color: #444; font-size: 11px; line-height: 13px; text-align: center;
}
.v1 { width: 60px; } .v2 { width: 70px; } .v3 { width: 71px; }
.hbar { width: 480px; height: 15px; display: flex; align-items: center; margin-left: 3px; padding: 0 1px 0 4px; background: #e8e8e8; }
.sah { width: 6px; height: 8px; flex: none; }
.hspace { flex: 1; }
.hthumb { width: 25px; height: 13px; margin: 0 8px 0 0; background: repeating-linear-gradient(90deg, #555 0 1px, transparent 1px 3px) center / 8px 8px no-repeat, linear-gradient(#e0e0e0, #777 80%); border: 1px solid #888; }
.sgrip { width: 14px; height: 14px; margin-left: auto; background: radial-gradient(#666 .7px, transparent 1px) 0 0 / 4px 4px; }

/* navigator */
.navigator { grid-column: 4; grid-row: 2; padding-top: 3px; display: flex; flex-direction: column; min-height: 0; }
.ph.nav { padding-left: 3px; }
.navbtns { height: 31px; flex: none; display: flex; align-items: center; padding-top: 2px; }
.nb { width: 30px; height: 22px; display: flex; align-items: center; justify-content: center; flex: none; margin-right: 1px; }
.nb.first { border: 1px solid #777; border-radius: 3px; background: linear-gradient(#eee, #cfcfcf); margin: 0 5px 0 1px; }
.nb.active { border: 1px solid #666; border-radius: 3px; background: linear-gradient(#808080, #bbb 50%, #888); }
.nbi { width: 26px; height: 18px; }
.nbs { width: 20px; height: 16px; }
.tree {
  position: relative;
  height: 438px;
  flex: none;
  background: #fff;
  border: 1px solid #888;
  border-bottom: 0;
  padding-top: 1px;
  overflow: hidden;
}
.row { height: 16px; display: flex; align-items: center; white-space: nowrap; font-size: 11px; position: relative; }
.xp { display: block; width: 9px; height: 9px; flex: none; border: 1px solid #999; background: linear-gradient(135deg, #fff, #ccc); position: relative; }
.xp.none { border: 0; background: none; }
.xp.minus::after, .xp.plus::after { content: ""; position: absolute; left: 1px; right: 1px; top: 3px; height: 1px; background: #555; }
.xp.plus::before { content: ""; position: absolute; top: 1px; bottom: 1px; left: 3px; width: 1px; background: #555; }
.dot { display: block; width: 4px; height: 0; flex: none; border-top: 1px dotted #666; }
.l0 { padding-left: 8px; }
.l1 { padding-left: 27px; }
.l2 { padding-left: 50px; }
.l2 .dot { width: 11px; }
.l2b { padding-left: 50px; }
.l2b .dot { width: 8px; }
.dot.red { border-top-color: #a33; }
.ic { width: 16px; height: 13px; flex: none; margin: 0 3px 0 1px; }
.l2 .ic { margin-right: 2px; }
.ic.wide { margin: 0 5px 0 0; height: 14px; }
.cur { font-weight: bold; border: 1px solid #56707c; padding: 0 1px; line-height: 13px; margin-left: -1px; }
.vl { position: absolute; width: 0; border-left: 1px dotted #777; }
.vl0 { left: 12px; top: 16px; height: 282px; }
.vl1 { left: 31px; top: 32px; height: 250px; }
.vl2 { left: 49px; top: 32px; height: 40px; }
.vl3 { left: 49px; top: 192px; height: 24px; }
.navscroll {
  height: 15px; flex: none;
  display: flex; align-items: center; justify-content: space-between;
  padding: 0 6px;
  background: #e8e8e8;
  border: 1px solid #888; border-top: 1px solid #bbb;
  border-bottom: 1px solid #999;
}
.navthumb { width: 97px; height: 13px; margin-left: 3px; margin-right: 28px; background: repeating-linear-gradient(90deg, #555 0 1px, transparent 1px 3px) center / 10px 8px no-repeat, linear-gradient(#ececec 30%, #666 60%); border: 1px solid #888; }
.navactions { height: 24px; margin-top: 9px; flex: none; display: flex; justify-content: flex-end; gap: 3px; padding-right: 1px; }
.na { width: 20px; height: 21px; border: 1px solid #777; border-radius: 3px; background: linear-gradient(#f4f4f4, #cfcfcf); display: flex; align-items: center; justify-content: center; }
.nai { width: 16px; height: 15px; }
.props { margin-top: 6px; height: 17px; flex: none; display: flex; align-items: center; padding-left: 12px; background: #f4f4f4; border-radius: 8px; }
.td.big { width: 12px; margin: 0 7px 0 0; }
.proprow { height: 18px; margin-top: 3px; flex: none; display: flex; align-items: center; }
.pi { width: 10px; height: 9px; margin: 0 3px 0 3px; flex: none; }
.fld { height: 17px; line-height: 16px; }
.idx { width: 32px; background: #dcdcdc; border-left: 1px solid #777; border-top: 1px solid #999; margin-right: 3px; padding-left: 1px; }
.name { flex: 1; background: #fff; border-left: 1px solid #aaa; padding-left: 5px; }
.settings {
  width: 131px; height: 19px; flex: none;
  margin: 6px 0 0 14px;
  border: 1px solid #666; border-radius: 3px;
  background: linear-gradient(#efefef, #bcbcbc 40%, #555 65%, #666);
  text-align: center; line-height: 17px; color: #333; letter-spacing: .3px;
}
```
